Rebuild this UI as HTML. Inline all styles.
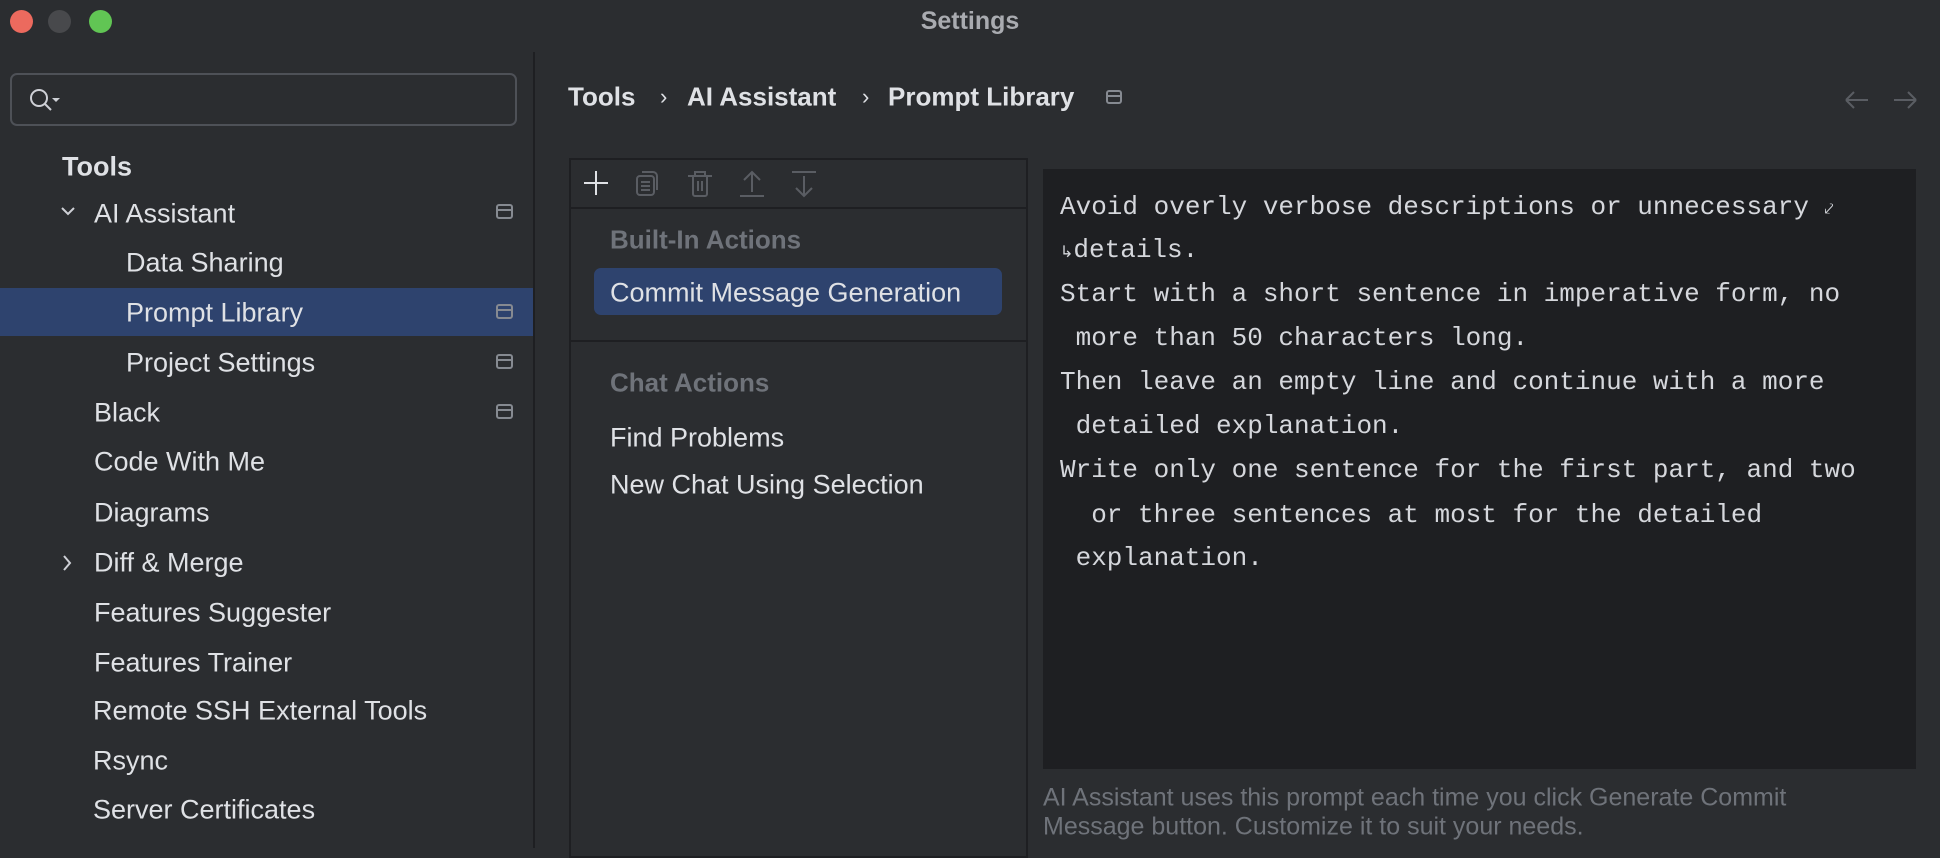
<!DOCTYPE html>
<html><head><meta charset="utf-8"><style>
*{margin:0;padding:0;box-sizing:border-box}
body{width:1940px;height:848px;background:#2b2d30;font-family:"Liberation Sans",sans-serif;color:#dfe1e5;position:relative;overflow:hidden}
.a{position:absolute;white-space:nowrap}
.dot{position:absolute;width:23px;height:23px;border-radius:50%;top:10px}
.t{font-size:27px;transform:translateY(-50%)}
.b{font-size:26px}
.ic{position:absolute;width:17px;height:15px;border:2px solid #868a91;border-radius:3px}
.ic:after{content:"";position:absolute;left:0;right:0;top:3px;border-top:2px solid #868a91}
.mono{font-family:"Liberation Mono",monospace;font-size:26px;color:#d5d7dc;position:absolute;left:1060px;white-space:pre;transform:translateY(-50%)}
</style></head><body>
<div class="dot" style="left:10px;background:#ec6a5e"></div>
<div class="dot" style="left:48px;background:#48494c"></div>
<div class="dot" style="left:89px;background:#61c554"></div>
<div class="a" style="left:0;width:1940px;text-align:center;top:7px;font-size:25px;font-weight:bold;color:#a9abb0">Settings</div>
<div class="a" style="left:533px;top:52px;width:2px;height:796px;background:#1e1f22"></div>

<div class="a" style="left:10px;top:73px;width:507px;height:53px;border:2px solid #4e5157;border-radius:7px"></div>
<svg class="a" style="left:28px;top:88px" width="36" height="26" viewBox="0 0 36 26"><circle cx="11" cy="10" r="8" fill="none" stroke="#ced0d6" stroke-width="2"/><line x1="17" y1="16" x2="23" y2="22" stroke="#ced0d6" stroke-width="2"/><path d="M24 10h8l-4 4z" fill="#ced0d6"/></svg>

<div class="a" style="left:0;top:288px;width:533px;height:48px;background:#2e436e"></div>
<div class="a t" style="left:62px;top:167px;font-weight:bold">Tools</div>
<svg class="a" style="left:60px;top:206px" width="16" height="12"><path d="M2 2l6 6 6-6" fill="none" stroke="#ced0d6" stroke-width="2"/></svg>
<div class="a t" style="left:94px;top:214px">AI Assistant</div>
<div class="a t" style="left:126px;top:263px">Data Sharing</div>
<div class="a t" style="left:126px;top:313px">Prompt Library</div>
<div class="a t" style="left:126px;top:363px">Project Settings</div>
<div class="a t" style="left:94px;top:413px">Black</div>
<div class="a t" style="left:94px;top:462px">Code With Me</div>
<div class="a t" style="left:94px;top:513px">Diagrams</div>
<svg class="a" style="left:62px;top:554px" width="12" height="18"><path d="M2 2l6 7-6 7" fill="none" stroke="#ced0d6" stroke-width="2"/></svg>
<div class="a t" style="left:94px;top:563px">Diff &amp; Merge</div>
<div class="a t" style="left:94px;top:613px">Features Suggester</div>
<div class="a t" style="left:94px;top:663px">Features Trainer</div>
<div class="a t" style="left:93px;top:711px">Remote SSH External Tools</div>
<div class="a t" style="left:93px;top:761px">Rsync</div>
<div class="a t" style="left:93px;top:810px">Server Certificates</div>
<div class="ic" style="left:496px;top:204px"></div>
<div class="ic" style="left:496px;top:304px"></div>
<div class="ic" style="left:496px;top:354px"></div>
<div class="ic" style="left:496px;top:404px"></div>

<div class="a t b" style="left:568px;top:97px;font-weight:bold">Tools</div>
<div class="a t" style="left:660px;top:97px;font-size:22px">›</div>
<div class="a t b" style="left:687px;top:97px;font-weight:bold">AI Assistant</div>
<div class="a t" style="left:862px;top:97px;font-size:22px">›</div>
<div class="a t b" style="left:888px;top:97px;font-weight:bold">Prompt Library</div>
<div class="ic" style="left:1106px;top:90px;width:16px;height:14px"></div>
<svg class="a" style="left:1842px;top:90px" width="80" height="20"><path d="M4 10h22M4 10l8-8M4 10l8 8" fill="none" stroke="#5a5d63" stroke-width="2"/><path d="M52 10h22M74 10l-8-8M74 10l-8 8" fill="none" stroke="#5a5d63" stroke-width="2"/></svg>

<div class="a" style="left:569px;top:158px;width:459px;height:700px;border:2px solid #1e1f22"></div>
<div class="a" style="left:569px;top:207px;width:459px;height:2px;background:#1e1f22"></div>
<div class="a" style="left:569px;top:340px;width:459px;height:2px;background:#1e1f22"></div>
<svg class="a" style="left:580px;top:168px" width="240" height="32" viewBox="0 0 240 32">
<path d="M4 15h24M16 3v24" stroke="#dfe1e5" stroke-width="2"/>
<rect x="57" y="8" width="17" height="19" rx="3" fill="none" stroke="#5a5d63" stroke-width="2"/><path d="M62 4h11a4 4 0 0 1 4 4v14M61 14h9M61 18h9M61 22h9" fill="none" stroke="#5a5d63" stroke-width="2"/>
<path d="M108 8h24M113 8v18a2 2 0 0 0 2 2h10a2 2 0 0 0 2-2V8M115 8V4h10v4M118 13v10M122 13v10" fill="none" stroke="#5a5d63" stroke-width="2"/>
<path d="M160 28h24M172 24V4M164 12l8-8 8 8" fill="none" stroke="#5a5d63" stroke-width="2"/>
<path d="M212 4h24M224 8v20M216 20l8 8 8-8" fill="none" stroke="#5a5d63" stroke-width="2"/>
</svg>
<div class="a t b" style="left:610px;top:240px;font-weight:bold;color:#6f737a">Built-In Actions</div>
<div class="a" style="left:594px;top:268px;width:408px;height:47px;background:#2e436e;border-radius:7px"></div>
<div class="a t" style="left:610px;top:293px">Commit Message Generation</div>
<div class="a t b" style="left:610px;top:383px;font-weight:bold;color:#6f737a">Chat Actions</div>
<div class="a t" style="left:610px;top:438px">Find Problems</div>
<div class="a t" style="left:610px;top:485px">New Chat Using Selection</div>

<div class="a" style="left:1043px;top:169px;width:873px;height:600px;background:#1e1f22"></div>
<div class="mono" style="top:207px">Avoid overly verbose descriptions or unnecessary <span style="font-size:16px">⤦</span></div>
<div class="mono" style="top:250px"><span style="font-size:16px">↳</span>details.</div>
<div class="mono" style="top:294px">Start with a short sentence in imperative form, no</div>
<div class="mono" style="top:338px"> more than 50 characters long.</div>
<div class="mono" style="top:382px">Then leave an empty line and continue with a more</div>
<div class="mono" style="top:426px"> detailed explanation.</div>
<div class="mono" style="top:470px">Write only one sentence for the first part, and two</div>
<div class="mono" style="top:515px">  or three sentences at most for the detailed</div>
<div class="mono" style="top:558px"> explanation.</div>

<div class="a t" style="left:1043px;top:798px;font-size:25px;color:#6f737a">AI Assistant uses this prompt each time you click Generate Commit</div>
<div class="a t" style="left:1043px;top:827px;font-size:25px;color:#6f737a">Message button. Customize it to suit your needs.</div>
</body></html>
